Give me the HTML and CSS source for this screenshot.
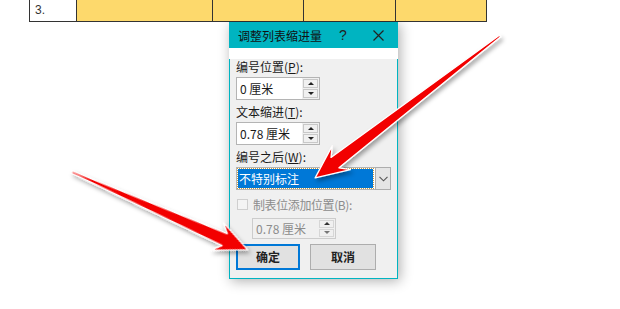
FILE: index.html
```html
<!DOCTYPE html>
<html lang="zh-CN">
<head>
<meta charset="UTF-8">
<title>调整列表缩进量</title>
<link rel="stylesheet" href="styles.css">
</head>
<body>

<div class="sheet-row">
	<div class="cell num">3.</div>
	<div class="cell fill"></div>
	<div class="cell fill"></div>
	<div class="cell fill"></div>
	<div class="cell fill"></div>
</div>

<div class="dialog">
	<div class="titlebar">
		<span class="title">调整列表缩进量</span>
		<span class="help">?</span>
		<span class="close">
			<svg width="11" height="11" viewBox="0 0 11 11"><path d="M0.5 0.5L10.5 10.5M10.5 0.5L0.5 10.5" stroke="#222" stroke-width="1.2"/></svg>
		</span>
	</div>
	<div class="content">
		<div class="label first">编号位置(<u>P</u>):</div>
		<div class="spin">
			<div class="spin-text">0 厘米</div>
			<div class="spin-btns"><span class="up"></span><span class="down"></span></div>
		</div>

		<div class="label">文本缩进(<u>T</u>):</div>
		<div class="spin">
			<div class="spin-text">0.78 厘米</div>
			<div class="spin-btns"><span class="up"></span><span class="down"></span></div>
		</div>

		<div class="label">编号之后(<u>W</u>):</div>
		<div class="combo">
			<div class="combo-sel">不特别标注</div>
			<div class="combo-btn">
				<svg width="9" height="6" viewBox="0 0 9 6"><path d="M0.5 0.8L4.5 4.8L8.5 0.8" fill="none" stroke="#555" stroke-width="1.1"/></svg>
			</div>
		</div>

		<div class="check-row">
			<span class="box"></span>
			<span class="check-label">制表位添加位置(B):</span>
		</div>
		<div class="spin disabled">
			<div class="spin-text">0.78 厘米</div>
			<div class="spin-btns"><span class="up"></span><span class="down"></span></div>
		</div>

		<div class="buttons">
			<div class="btn default">确定</div>
			<div class="btn">取消</div>
		</div>
	</div>
</div>

<svg class="arrows" width="620" height="309" viewBox="0 0 620 309">
	<defs>
		<filter id="shadow" x="-20%" y="-20%" width="140%" height="140%">
			<feDropShadow dx="2" dy="3" stdDeviation="2" flood-color="#000" flood-opacity=".35"/>
		</filter>
	</defs>
	<g filter="url(#shadow)" fill="#f20000" stroke="#fff" stroke-width="1.3" stroke-linejoin="round">
		<polygon transform="translate(500 36) rotate(142.5)" points="0,-1 208,-6.5 200,-15 233,0 200,15 208,6.5 0,1"/>
		<polygon transform="translate(72 172) rotate(23.9)" points="0,-1 167,-6.5 159,-15 192,0 159,15 167,6.5 0,1"/>
	</g>
</svg>

</body>
</html>
```

FILE: styles.css
```css
body {
	margin: 0;
	background: #fff;
	font-family: "Noto Sans CJK SC", "Liberation Sans", sans-serif;
	font-size: 12px;
	color: #1a1a1a;
	position: relative;
	width: 620px;
	height: 309px;
	overflow: hidden;
}

.sheet-row {
	display: grid;
	grid-template-columns: 47px 136px 91px 92px 91px;
	margin-left: 29px;
	width: 458px;
	height: 22px;
	box-sizing: border-box;
	border-left: 1px solid #333;
	border-bottom: 1px solid #333;
}
.cell {
	border-right: 1px solid #333;
}
.cell.num {
	background: #fff;
	font-family: "Liberation Sans", sans-serif;
	font-size: 12px;
	color: #333;
	line-height: 21px;
	padding-left: 5px;
}
.cell.fill {
	background: #fdd96c;
}

.dialog {
	margin-left: 229px;
	width: 169px;
	box-shadow: 2px 2px 12px rgba(0, 0, 0, .32);
}
.titlebar {
	display: flex;
	align-items: center;
	height: 26px;
	background: #00b4c1;
	padding-left: 9px;
}
.title {
	font-size: 12px;
	color: #111;
}
.help {
	margin-left: auto;
	width: 30px;
	text-align: center;
	font-family: "Liberation Sans", sans-serif;
	font-size: 14px;
	color: #222;
}
.close {
	width: 40px;
	display: flex;
	justify-content: center;
}

.content {
	background: #f0f0f0;
	border: 1px solid #00b4c1;
	border-top: 0;
	padding: 0 6px 8px 6px;
}
.label {
	line-height: 16px;
	margin-top: 4px;
}
.label.first {
	margin-top: 11px;
}
.label u {
	text-decoration: underline;
}

.spin {
	display: flex;
	width: 84px;
	height: 23px;
	box-sizing: border-box;
	border: 1px solid #b4b4b4;
	background: #fff;
	margin-top: 2px;
}
.spin-text {
	flex: 1;
	line-height: 21px;
	padding-left: 3px;
}
.spin-btns {
	width: 15px;
	display: flex;
	flex-direction: column;
	gap: 1px;
	background: #f0f0f0;
	padding: 1px;
}
.spin-btns span {
	flex: 1;
	border: 1px solid #c8c8c8;
	background: #f0f0f0;
	position: relative;
}
.spin-btns .up::after,
.spin-btns .down::after {
	content: "";
	position: absolute;
	left: 50%;
	top: 50%;
	margin: -2px 0 0 -3px;
	border-left: 3px solid transparent;
	border-right: 3px solid transparent;
}
.spin-btns .up::after {
	border-bottom: 3px solid #222;
}
.spin-btns .down::after {
	border-top: 3px solid #222;
}

.combo {
	display: flex;
	width: 155px;
	height: 23px;
	box-sizing: border-box;
	border: 1px solid #b4b4b4;
	background: #fff;
	margin-top: 2px;
	padding: 1px;
}
.combo-sel {
	flex: 1;
	background: #0078d7;
	color: #fff;
	line-height: 19px;
	padding-left: 1px;
	outline: 1px dotted #c89a40;
}
.combo-btn {
	width: 14px;
	margin: -2px -2px -2px 2px;
	border: 1px solid #adadad;
	background: #e5e5e5;
	display: flex;
	align-items: center;
	justify-content: center;
}

.check-row {
	display: flex;
	align-items: center;
	gap: 5px;
	margin-top: 6px;
	height: 16px;
	padding-left: 1px;
}
.box {
	width: 9px;
	height: 9px;
	border: 1px solid #cfcfcf;
	background: #f4f4f4;
}
.check-label {
	color: #8c8c8c;
	letter-spacing: -.4px;
}

.spin.disabled {
	margin-left: 16px;
	margin-top: 6px;
	height: 21px;
	background: #f0f0f0;
	border-color: #cccccc;
}
.spin.disabled .spin-text {
	color: #8c8c8c;
	line-height: 19px;
}
.spin.disabled .spin-btns span {
	border-color: #d6d6d6;
}
.spin.disabled .up::after {
	border-bottom-color: #333;
}
.spin.disabled .down::after {
	border-top-color: #777;
}

.buttons {
	display: flex;
	gap: 10px;
	margin-top: 5px;
}
.btn {
	width: 64px;
	height: 26px;
	box-sizing: border-box;
	border: 1px solid #adadad;
	background: #e1e1e1;
	text-align: center;
	line-height: 24px;
	font-weight: bold;
	color: #222;
}
.btn.default {
	border: 2px solid #0078d7;
	line-height: 22px;
}
.btn + .btn {
	width: 66px;
}

.arrows {
	position: absolute;
	left: 0;
	top: 0;
	pointer-events: none;
}
```
